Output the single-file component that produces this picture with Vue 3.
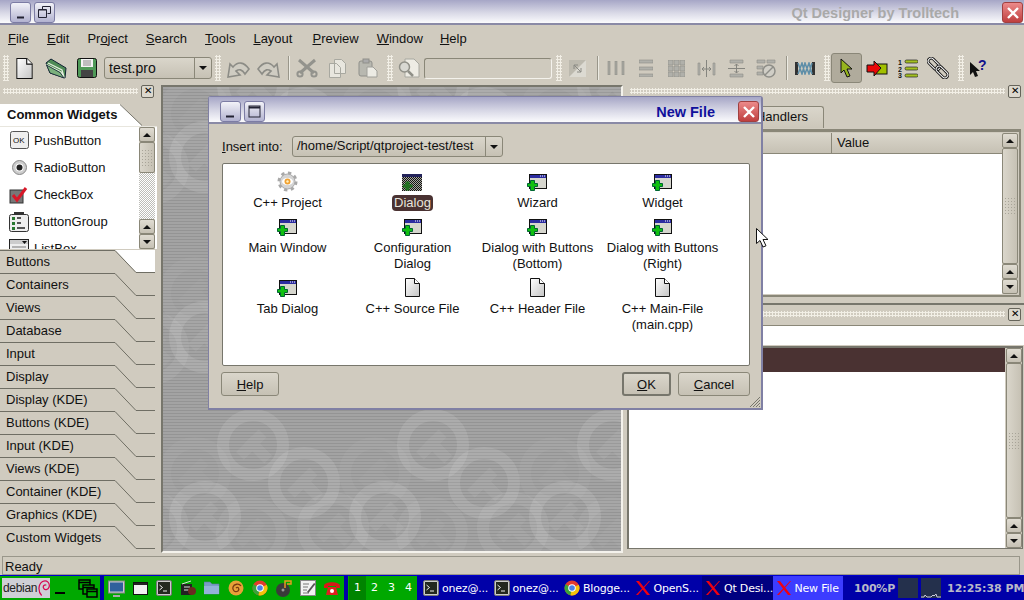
<script setup>
const menus = [
  ['', 'F', 'ile'], ['', 'E', 'dit'], ['Pr', 'o', 'ject'], ['', 'S', 'earch'], ['', 'T', 'ools'],
  ['', 'L', 'ayout'], ['', 'P', 'review'], ['', 'W', 'indow'], ['', 'H', 'elp']
]
const toolboxTabs = [
  'Buttons', 'Containers', 'Views', 'Database', 'Input', 'Display', 'Display (KDE)', 'Buttons (KDE)',
  'Input (KDE)', 'Views (KDE)', 'Container (KDE)', 'Graphics (KDE)', 'Custom Widgets'
]
const files = [
  { icon: 'gear', label: ['C++ Project'] },
  { icon: 'sel', label: ['Dialog'], selected: true },
  { icon: 'winadd', label: ['Wizard'] },
  { icon: 'winadd', label: ['Widget'] },
  { icon: 'winadd', label: ['Main Window'] },
  { icon: 'winadd', label: ['Configuration', 'Dialog'] },
  { icon: 'winadd', label: ['Dialog with Buttons', '(Bottom)'] },
  { icon: 'winadd', label: ['Dialog with Buttons', '(Right)'] },
  { icon: 'winadd', label: ['Tab Dialog'] },
  { icon: 'doc', label: ['C++ Source File'] },
  { icon: 'doc', label: ['C++ Header File'] },
  { icon: 'doc', label: ['C++ Main-File', '(main.cpp)'] }
]
const tasks = [
  { icon: 'term', text: 'onez@...' },
  { icon: 'term', text: 'onez@...' },
  { icon: 'chrome', text: 'Blogge...' },
  { icon: 'x', text: 'OpenS...' },
  { icon: 'x', text: 'Qt Desi...', cls: 'dark' },
  { icon: 'x', text: 'New File', cls: 'active' }
]

// background logo rings, one 180px tile repeated over the workspace
const tile = [
  [45, 72, 0.1], [93, 0, 0.1], [144, 38, 0.1],
  [173, 83, 0.07], [35, 28, 0.04], [92, 88, 0.05]
]
const rings = []
for (let tx = -1; tx < 3; tx++) {
  for (let ty = -1; ty < 3; ty++) {
    tile.forEach(([x, y, o]) => {
      rings.push({ x: x + tx * 180 - 3, y: y + ty * 180 - 2, o })
    })
  }
}
</script>

<template>
  <div class="app">
    <svg class="defs" width="0" height="0">
      <defs>
        <linearGradient id="page" x1="0" y1="0" x2="1" y2="1">
          <stop offset="0" stop-color="#fff" /><stop offset="1" stop-color="#c4c4c4" />
        </linearGradient>
        <pattern id="dither" width="2" height="2" patternUnits="userSpaceOnUse">
          <rect width="2" height="2" fill="#a8a8a0" /><rect width="1" height="1" fill="#111" /><rect x="1" y="1" width="1" height="1" fill="#111" />
        </pattern>
      </defs>
      <symbol id="winadd" viewBox="0 0 20 17">
        <rect x="2.5" y="0.5" width="17" height="14" fill="#d6d6ce" stroke="#111" />
        <rect x="3" y="1" width="16" height="3" fill="#2c2ca0" />
        <path d="M13 2h1M15 2h1M17 2h1" stroke="#fff" />
        <path d="M3.5 6.5h4v3h3v3h-3v4h-4v-4H.5v-3h3z" fill="#10c010" stroke="#063" />
      </symbol>
      <symbol id="sel" viewBox="0 0 20 17">
        <rect x="0" y="0" width="20" height="17" fill="url(#dither)" />
        <rect x="0" y="0" width="20" height="3" fill="#23235a" />
        <path d="M3.5 7.5h4v3h3v3h-3v3h-4v-3H1v-3h2.500z" fill="#207020" />
      </symbol>
      <symbol id="doc" viewBox="0 0 15 19">
        <path d="M.5.5h9l5 5v13H.5z" fill="url(#page)" stroke="#111" />
        <path d="M9.500.5v5h5" fill="#fff" stroke="#111" />
      </symbol>
      <symbol id="gear" viewBox="0 0 21 21">
        <circle cx="10.500" cy="10.500" r="8.500" fill="none" stroke="#a8a8a8" stroke-width="3" stroke-dasharray="3.300 3.400" />
        <circle cx="10.500" cy="10.500" r="7.500" fill="#d4d4d4" stroke="#aaa" />
        <ellipse cx="10.500" cy="10.500" rx="5.500" ry="3.500" fill="#fff" />
        <circle cx="10.500" cy="10.500" r="3" fill="#f0a030" />
        <circle cx="10.500" cy="10.500" r="1.200" fill="#fff0c0" />
      </symbol>
      <symbol id="term" viewBox="0 0 16 16">
        <rect x=".5" y=".5" width="15" height="15" rx="1.500" fill="#ccc" stroke="#777" />
        <rect x="2" y="2" width="12" height="12" fill="#23281f" />
        <path d="M3.500 5l3 2.500-3 2.500M7 11h4" fill="none" stroke="#eee" />
      </symbol>
      <symbol id="chrome" viewBox="0 0 16 16">
        <circle cx="8" cy="8" r="7.500" fill="#e23b2e" />
        <path d="M8 8L1.500 4.200A7.500 7.500 0 0 0 6.500 15.300z" fill="#3aa53a" />
        <path d="M8 8l6.800-3.200A7.500 7.500 0 0 1 6.500 15.300z" fill="#f4c20d" />
        <circle cx="8" cy="8" r="3.800" fill="#fff" /><circle cx="8" cy="8" r="2.800" fill="#4a80e8" />
      </symbol>
      <symbol id="x" viewBox="0 0 16 16">
        <path d="M1 1l3 0 11 14-3 0zM14 1l1 0L3 15 1 15z" fill="#f00010" />
      </symbol>
    </svg>

    <!-- main window title -->
    <header class="titlebar">
      <button class="wbtn"><svg width="12" height="12" viewBox="0 0 12 12"><path d="M2 10.500h7" stroke="#223" stroke-width="2" /></svg></button>
      <button class="wbtn"><svg width="13" height="13" viewBox="0 0 13 13"><path d="M4.500 3V.5h8v7H9.500M.5 3.500h8v8h-8z" fill="none" stroke="#223" /><path d="M1 4h7" stroke="#223" /></svg></button>
      <span class="win-title">Qt Designer by Trolltech</span>
      <button class="wbtn red main-close"><svg width="14" height="14" viewBox="0 0 14 14"><path d="M2 2l10 10M12 2L2 12" stroke="#fff" stroke-width="2.400" /></svg></button>
    </header>

    <nav class="menubar">
      <span v-for="m in menus" :key="m[2]" class="menu">{{ m[0] }}<u>{{ m[1] }}</u>{{ m[2] }}</span>
    </nav>

    <div class="toolbar">
      <i class="grip"></i>
      <span class="tool w31"><svg width="17" height="21" viewBox="0 0 15 19"><use href="#doc" /></svg></span>
      <span class="tool w31">
        <svg width="22" height="21" viewBox="0 0 22 21"><path d="M1 5l5-4 5 3 10 6-1 10-15-5z" fill="#4e8a56" stroke="#123" /><path d="M3 5l14 7 2 7M1.500 6.500L16 14l3 6" fill="none" stroke="#e4eedd" stroke-width="1.200" /><path d="M1.500 7L15 14.500l4 5.500L5 15z" fill="#7bb07d" stroke="#123" stroke-width=".8" /></svg>
      </span>
      <span class="tool w31">
        <svg width="20" height="20" viewBox="0 0 20 20"><rect x=".5" y=".5" width="19" height="19" rx="2" fill="#4f9a58" stroke="#111" /><rect x="4" y="1" width="12" height="8" fill="#f4f4f4" /><path d="M6 3h8M6 5h8M6 7h8" stroke="#888" /><rect x="4" y="12" width="12" height="7" fill="#444" /></svg>
      </span>
      <div class="combo project">test.pro<span class="drop"><i class="arrow down"></i></span></div>
      <i class="grip m3"></i>
      <span class="tool"><svg width="23" height="20" viewBox="0 0 23 20"><path d="M1 19L3 6l3 3c5-6 11-5 16 2l-4 5c-3-5-6-5-9-3l4 4z" fill="#cfccc2" stroke="#8c8c86" stroke-width="1.600" /></svg></span>
      <span class="tool"><svg width="23" height="20" viewBox="0 0 23 20"><path d="M22 19L20 6l-3 3C12 3 6 4 1 11l4 5c3-5 6-5 9-3l-4 4z" fill="#cfccc2" stroke="#8c8c86" stroke-width="1.600" /></svg></span>
      <i class="sep"></i>
      <span class="tool"><svg width="22" height="20" viewBox="0 0 22 20"><path d="M3 2l15 13M19 2L4 15" stroke="#93938d" stroke-width="3" /><circle cx="4" cy="16" r="2.600" fill="none" stroke="#93938d" stroke-width="2" /><circle cx="18" cy="16" r="2.600" fill="none" stroke="#93938d" stroke-width="2" /></svg></span>
      <span class="tool w31"><svg width="19" height="19" viewBox="0 0 19 19"><path d="M6.500.5h7l4 4v10h-11zM1.500 4.500h7l4 4v10h-11z" fill="#e8e6de" stroke="#a8a8a0" /></svg></span>
      <span class="tool"><svg width="20" height="20" viewBox="0 0 20 20"><rect x="1" y="3" width="13" height="15" rx="2" fill="#b8b8b0" stroke="#8f8f8a" /><rect x="5" y="1" width="6" height="4" fill="#aaa" stroke="#8f8f8a" /><path d="M9 9h6l4 4v6H9z" fill="#ecebe4" stroke="#a0a09a" /></svg></span>
      <i class="grip m4"></i>
      <span class="tool"><svg width="22" height="20" viewBox="0 0 22 20"><path d="M7 1h9l5 5v13H7z" fill="#eeece4" stroke="#a8a8a0" /><circle cx="6.500" cy="9" r="5" fill="#d8d8d2" stroke="#909088" stroke-width="1.500" /><path d="M10 13l5 5" stroke="#909088" stroke-width="2.500" /></svg></span>
      <div class="lineedit"></div>
      <i class="grip m0"></i>
      <span class="tool"><svg width="17" height="17" viewBox="0 0 17 17"><rect width="17" height="17" fill="#bcb9ae" /><path d="M17 0v17H0z" fill="#dcdad2" /><path d="M5 5l7 7M5 5h4M5 5v4M12 12H8M12 12V8" stroke="#8a8a84" /></svg></span>
      <i class="sep"></i>
      <span class="tool"><svg width="20" height="14" viewBox="0 0 20 14"><path d="M2 0h2v14H2zM9 0h2v14H9zM16 0h2v14h-2z" fill="#a8a8a2" stroke="#8e8e88" stroke-width=".6" /></svg></span>
      <span class="tool"><svg width="14" height="18" viewBox="0 0 14 18"><path d="M0 1h14v3H0zM0 8h14v3H0zM0 15h14v3H0z" fill="#b0b0aa" stroke="#8e8e88" stroke-width=".6" /></svg></span>
      <span class="tool"><svg width="17" height="17" viewBox="0 0 17 17"><path d="M0 0h5v5H0zM6 0h5v5H6zM12 0h5v5h-5zM0 6h5v5H0zM6 6h5v5H6zM12 6h5v5h-5zM0 12h5v5H0zM6 12h5v5H6zM12 12h5v5h-5z" fill="#b0b0aa" stroke="#8e8e88" stroke-width=".6" /></svg></span>
      <span class="tool"><svg width="19" height="17" viewBox="0 0 19 17"><path d="M1 3h2v12H1zM16 3h2v12h-2z" fill="#b0b0aa" stroke="#8e8e88" stroke-width=".6" /><path d="M5 9h9M5 9l2-2M5 9l2 2M14 9l-2-2M14 9l-2 2M9.500 0v17" stroke="#85857f" fill="none" /></svg></span>
      <span class="tool"><svg width="17" height="19" viewBox="0 0 17 19"><path d="M2 1h13v3H2zM2 15h13v3H2z" fill="#b0b0aa" stroke="#8e8e88" stroke-width=".6" /><path d="M8.500 5v9M8.500 5L6.500 7M8.500 5l2 2M8.500 14l-2-2M8.500 14l2-2M0 9.500h17" stroke="#85857f" fill="none" /></svg></span>
      <span class="tool"><svg width="21" height="19" viewBox="0 0 21 19"><path d="M1 1h8v3H1zM11 1h8v3h-8zM1 7h6v3H1zM1 13h6v3H1z" fill="#b0b0aa" stroke="#8e8e88" stroke-width=".6" /><circle cx="13" cy="12" r="6" fill="#d0cec6" stroke="#8e8e88" stroke-width="1.500" /><path d="M9 16l8-8" stroke="#8e8e88" stroke-width="1.500" /></svg></span>
      <i class="sep"></i>
      <span class="tool"><svg width="20" height="13" viewBox="0 0 20 13"><path d="M0 0h3v13H0zM17 0h3v13h-3z" fill="#333" /><path d="M3 1l4 11 3-11 4 11 3-11M3 12L7 1l3 11 4-11 3 11" fill="none" stroke="#5e8ea8" stroke-width="1.500" /></svg></span>
      <i class="grip m1"></i>
      <span class="tool pressed"><svg width="13" height="20" viewBox="0 0 13 20"><path d="M1 1v14l3-3 3 7 3-1-3-7h5z" fill="#96b41e" stroke="#111" /></svg></span>
      <span class="tool"><svg width="22" height="17" viewBox="0 0 22 17"><rect x="10" y="4" width="11" height="10" fill="#a2c000" stroke="#111" /><path d="M1 5h7V1l7 7-7 8v-4H1z" fill="#e80808" stroke="#111" /></svg></span>
      <span class="tool w31">
        <svg width="20" height="20" viewBox="0 0 20 20"><text x="0" y="6.500" class="ord">1</text><text x="0" y="13.500" class="ord">2</text><text x="0" y="20" class="ord">3</text><rect x="7" y="2" width="13" height="3" rx="1.500" fill="#a4c020" stroke="#222" stroke-width=".7" /><rect x="7" y="9" width="13" height="3" rx="1.500" fill="#a4c020" stroke="#222" stroke-width=".7" /><rect x="7" y="16" width="13" height="3" rx="1.500" fill="#a4c020" stroke="#222" stroke-width=".7" /></svg>
      </span>
      <span class="tool">
        <svg width="22" height="22" viewBox="0 0 22 22" fill="none">
          <g transform="rotate(45 7 7)"><rect x="0" y="4" width="14" height="6" rx="3" stroke="#111" stroke-width="2.800" /><rect x="0" y="4" width="14" height="6" rx="3" stroke="#fff" stroke-width="1" /></g>
          <g transform="rotate(45 15 15)"><rect x="8" y="12" width="14" height="6" rx="3" stroke="#111" stroke-width="2.800" /><rect x="8" y="12" width="14" height="6" rx="3" stroke="#fff" stroke-width="1" /></g>
        </svg>
      </span>
      <i class="grip m5"></i>
      <span class="tool"><svg width="18" height="20" viewBox="0 0 18 20"><path d="M0 4v13l3-3 2 5 3-1-2-5h4z" fill="#111" /><text x="8" y="12" class="whats">?</text></svg></span>
    </div>

    <div class="workspace">
      <!-- widget box -->
      <aside class="dock-left">
        <div class="dock-head"><i class="dock-grip"></i><button class="dock-x">✕</button></div>
        <div class="page-tab">
          <b>Common Widgets</b>
          <svg class="tab-edge" width="45" height="22" viewBox="0 0 45 22"><path d="M0 0H20L42 22H0z" fill="#fff" /><path d="M20 .5L42 21.500" stroke="#77766c" fill="none" /></svg>
        </div>
        <div class="widget-list">
          <ul>
            <li><span class="wicon"><svg width="19" height="19" viewBox="0 0 19 19"><rect x=".5" y=".5" width="18" height="17" rx="2" fill="#eee" stroke="#555" /><text x="3" y="12" class="okt">OK</text></svg></span>PushButton</li>
            <li><span class="wicon"><svg width="15" height="15" viewBox="0 0 15 15"><circle cx="7.500" cy="7.500" r="7" fill="#ccc" stroke="#888" /><circle cx="7.500" cy="7.500" r="4" fill="#fff" /><circle cx="7.500" cy="7.500" r="3" fill="#222" /></svg></span>RadioButton</li>
            <li><span class="wicon"><svg width="20" height="18" viewBox="0 0 20 18"><rect x="1" y="4" width="13" height="13" fill="#777" stroke="#333" /><path d="M4 9l4 5 9-12" fill="none" stroke="#d81828" stroke-width="3" /></svg></span>CheckBox</li>
            <li><span class="wicon"><svg width="20" height="20" viewBox="0 0 20 20"><rect x=".5" y="2.500" width="19" height="17" rx="2" fill="#eee" stroke="#333" /><rect x="5" y="0" width="10" height="3" fill="#333" /><path d="M3 5h3v3H3zM3 10h3v3H3zM3 15h3v3H3z" fill="#287830" /><path d="M8 6h4M8 11h4M8 16h8" stroke="#555" stroke-width="2" /></svg></span>ButtonGroup</li>
            <li><span class="wicon"><svg width="20" height="20" viewBox="0 0 20 20"><rect x=".5" y=".5" width="19" height="19" fill="#eee" stroke="#222" /><rect x="1" y="1" width="18" height="4" fill="#ccc" /><path d="M13 2h5l-2.500 3z" fill="#111" /><path d="M3 8h14M3 11h14M3 14h14M3 17h14" stroke="#777" /></svg></span>ListBox</li>
          </ul>
          <div class="sb checker-sb">
            <div class="sb-btn"><i class="arrow up"></i></div>
            <div class="sb-thumb small"><i class="sb-dots"></i></div>
            <div class="sb-track"></div>
            <div class="sb-btn"><i class="arrow up"></i></div>
            <div class="sb-btn"><i class="arrow down"></i></div>
          </div>
        </div>
        <div class="box-tabs">
          <div v-for="(t, i) in toolboxTabs" :key="t" class="box-tab">
            <svg class="tab-line" width="157" height="23" viewBox="0 0 157 23">
              <path v-if="i === 0" d="M115 0H155V22H136z" fill="#fff" />
              <path d="M0 .5H115L136 22.500H155" fill="none" stroke="#6f6e64" />
            </svg>
            <span>{{ t }}</span>
          </div>
        </div>
      </aside>

      <!-- mdi workspace -->
      <main class="mdi">
        <svg class="mdi-bg" width="100%" height="100%">
          <g v-for="(r, i) in rings" :key="i" :transform="`translate(${r.x} ${r.y})`" :opacity="r.o">
            <circle r="30" fill="none" stroke="#fff" stroke-width="12" />
            <g transform="rotate(-45)" fill="#fff" opacity=".6">
              <rect x="-17" y="-7" width="32" height="11" />
              <rect x="-5" y="-7" width="11" height="28" />
            </g>
          </g>
        </svg>
      </main>

      <!-- property editor and object explorer -->
      <aside class="dock-right">
        <div class="dock-head"><i class="dock-grip"></i><button class="dock-x">✕</button></div>
        <div class="prop-tabs"><span class="prop-tab">Signal Handlers</span></div>
        <div class="prop-frame">
          <div class="prop-table">
            <div class="table-head"><span class="col-prop">Property</span><span class="col-val">Value</span></div>
          </div>
          <div class="sb">
            <div class="sb-btn"><i class="arrow up"></i></div>
            <div class="sb-thumb"><i class="sb-dots"></i></div>
            <div class="sb-btn"><i class="arrow up"></i></div>
            <div class="sb-btn"><i class="arrow down"></i></div>
          </div>
        </div>
        <div class="splitter"></div>
        <div class="dock-head low"><i class="dock-grip"></i><button class="dock-x">✕</button></div>
        <div class="search-row"></div>
        <div class="tree-frame">
          <div class="tree"><div class="tree-sel"></div></div>
          <div class="sb">
            <div class="sb-btn"><i class="arrow up"></i></div>
            <div class="sb-thumb"><i class="sb-dots"></i></div>
            <div class="sb-btn"><i class="arrow up"></i></div>
            <div class="sb-btn"><i class="arrow down"></i></div>
          </div>
        </div>
      </aside>
    </div>

    <div class="statusbar"><span>Ready</span></div>

    <footer class="taskbar">
      <div class="start">
        <div class="debian">
          <span>debian</span>
          <svg width="14" height="18" viewBox="0 0 15 18"><path d="M5 17C1 13 1 5 6 2c5-2 8 2 7 6-1 3-5 4-6 1-1-2 1-4 3-3" fill="none" stroke="#d70751" stroke-width="1.300" /></svg>
        </div>
        <i class="minimize"></i>
        <svg class="stack" width="20" height="19" viewBox="0 0 20 19"><path d="M1 1h11v9H1zM1 3.500h11" fill="none" stroke="#000" stroke-width="1.500" /><path d="M5 6h11v9H5zM5 8.500h11" fill="#00a800" stroke="#000" stroke-width="1.500" /><path d="M9 10h10v8H9zM9 12.500h10" fill="#00a800" stroke="#000" stroke-width="1.500" /></svg>
      </div>
      <div class="launchers">
        <span class="lnch"><svg width="17" height="17" viewBox="0 0 17 17"><rect x=".5" y="1" width="16" height="12" fill="#c8ccd0" stroke="#888" /><rect x="2" y="2.500" width="13" height="9" fill="#30609c" /><path d="M5 15h7v2H5z" fill="#aaa" /></svg></span>
        <span class="lnch"><svg width="15" height="13" viewBox="0 0 15 13"><rect x=".5" y=".5" width="14" height="12" fill="#f0f0f0" stroke="#111" /><rect x="1" y="1" width="13" height="2" fill="#222" /></svg></span>
        <span class="lnch"><svg width="16" height="16" viewBox="0 0 16 16"><use href="#term" /></svg></span>
        <span class="lnch"><svg width="16" height="16" viewBox="0 0 16 16"><rect x="1" y="4" width="11" height="11" fill="#222" /><path d="M2 4l9-3M4 7h6M4 10h6" stroke="#ddd" /><circle cx="12" cy="11" r="4" fill="#6a2a20" /></svg></span>
        <span class="lnch"><svg width="16" height="14" viewBox="0 0 16 14"><path d="M0 1h6l2 2h7v10H0z" fill="#7a9cc6" stroke="#5a7aa0" stroke-width=".6" /><path d="M0 5h15v8H0z" fill="#93b2d8" /></svg></span>
        <span class="lnch"><svg width="16" height="16" viewBox="0 0 16 16"><circle cx="8" cy="8" r="7.500" fill="#e8a038" /><path d="M8 8c2-2 4 1 2 3-3 2-6-1-5-4 1-3 6-4 8-1" fill="none" stroke="#7a3a10" stroke-width="1.300" /></svg></span>
        <span class="lnch"><svg width="16" height="16" viewBox="0 0 16 16"><use href="#chrome" /></svg></span>
        <span class="lnch"><svg width="17" height="17" viewBox="0 0 17 17"><circle cx="7" cy="10" r="7" fill="#3a3a3a" /><circle cx="7" cy="10" r="1.500" fill="#999" /><path d="M9 8V1h6v3h-4" fill="none" stroke="#e89a20" stroke-width="1.500" /></svg></span>
        <span class="lnch"><svg width="16" height="16" viewBox="0 0 16 16"><rect x=".5" y=".5" width="15" height="15" fill="#f2f2f2" stroke="#888" /><path d="M3 4h6M3 7h5M3 10h4M3 13h6" stroke="#777" /><path d="M7 12l7-9 1.500 1-7 9z" fill="#555" /></svg></span>
        <span class="lnch"><svg width="16" height="14" viewBox="0 0 16 14"><path d="M0 5c0-5 16-5 16 0v2h-4V5H4v2H0z" fill="#d81818" /><path d="M4 6h8l2 8H2z" fill="#e02020" /><circle cx="8" cy="10" r="2" fill="#fff" /></svg></span>
      </div>
      <div class="pager">
        <span class="cur">1</span><span>2</span><span>3</span><span>4</span>
      </div>
      <div class="tasklist">
        <div v-for="(t, i) in tasks" :key="i" class="task" :class="t.cls">
          <svg width="16" height="16" viewBox="0 0 16 16"><use :href="'#' + t.icon" /></svg>
          <span>{{ t.text }}</span>
        </div>
      </div>
      <div class="tray">
        <b class="batt">100%P</b>
        <i class="mon"></i>
        <i class="mon"><svg width="20" height="20" viewBox="0 0 20 20"><path d="M0 19h3l1-2 2 2h4l2-2 1 1 2-2 1 3h4" fill="none" stroke="#c8c8d8" /></svg></i>
        <b class="clock">12:25:38 PM</b>
      </div>
    </footer>

    <!-- new file dialog -->
    <section class="dialog">
      <div class="dlg-title">
        <button class="wbtn"><svg width="12" height="12" viewBox="0 0 12 12"><path d="M1 10.500h8" stroke="#223" stroke-width="2" /></svg></button>
        <button class="wbtn"><svg width="13" height="13" viewBox="0 0 13 13"><rect x="1" y="1" width="11" height="11" fill="none" stroke="#223" /><path d="M1 2.500h11" stroke="#223" stroke-width="2" /></svg></button>
        <b class="dlg-name">New File</b>
        <button class="wbtn red"><svg width="14" height="14" viewBox="0 0 14 14"><path d="M2 2l10 10M12 2L2 12" stroke="#fff" stroke-width="2.400" /></svg></button>
      </div>
      <div class="dlg-body">
        <div class="insert-row">
          <label><u>I</u>nsert into:</label>
          <div class="combo path">/home/Script/qtproject-test/test<span class="drop"><i class="arrow down"></i></span></div>
        </div>
        <div class="file-grid">
          <div v-for="(f, i) in files" :key="f.label[0]" class="file-item" :class="{ big: i < 4 }">
            <span class="file-icon">
              <svg v-if="f.icon === 'gear'" width="21" height="21" viewBox="0 0 21 21"><use href="#gear" /></svg>
              <svg v-else-if="f.icon === 'doc'" class="doc-icon" width="15" height="19" viewBox="0 0 15 19"><use href="#doc" /></svg>
              <svg v-else class="win-icon" width="20" height="17" viewBox="0 0 20 17"><use :href="'#' + f.icon" /></svg>
            </span>
            <span v-for="l in f.label" :key="l" class="file-label" :class="{ selected: f.selected }">{{ l }}</span>
          </div>
        </div>
        <div class="dlg-buttons">
          <button class="btn help-btn"><u>H</u>elp</button>
          <span class="spacer"></span>
          <button class="btn ok"><u>O</u>K</button>
          <button class="btn cancel"><u>C</u>ancel</button>
        </div>
      </div>
      <svg class="size-grip" width="12" height="12" viewBox="0 0 12 12"><path d="M11 1L1 11M11 4l-7 7M11 7l-4 4M11 10l-1 1" stroke="#77766c" /></svg>
    </section>

    <svg class="cursor" width="13" height="20" viewBox="0 0 13 20"><path d="M.5.500v15l3.500-3 3 6.500 3-1.200-3-6.300h5z" fill="#fff" stroke="#111" /></svg>
  </div>
</template>

<style scoped>
.app {
  position: relative;
  width: 1024px;
  height: 600px;
  overflow: hidden;
  display: flex;
  flex-direction: column;
  background: #d0cbbf;
  color: #111;
  font-family: "Liberation Sans", Arial, sans-serif;
  font-size: 13px;
}
.defs { position: absolute; }
button { font: inherit; color: inherit; padding: 0; }
i { display: block; font-style: normal; }

.titlebar {
  height: 25px;
  box-sizing: border-box;
  display: flex;
  align-items: center;
  padding: 2px 1px 0 10px;
  gap: 3px;
  border-bottom: 2px solid #8a8aa6;
  background: linear-gradient(#a6a6c6, #d8d8e6 55%, #fbfbfd);
}
.wbtn {
  width: 21px;
  height: 21px;
  box-sizing: border-box;
  border: 1px solid #7c7ca4;
  border-radius: 3px;
  background: linear-gradient(#f2f2f8, #b2b2d0);
  display: flex;
  align-items: center;
  justify-content: center;
}
.wbtn.red { border-color: #a04040; background: linear-gradient(#ec8a8a, #bf3f3f); }
.win-title { margin-left: auto; margin-right: 40px; font-size: 14.500px; font-weight: bold; color: #a9a9a9; }

.menubar { height: 27px; display: flex; align-items: center; padding-left: 8px; box-sizing: border-box; }
.menu { margin-right: 18px; }
.menu:nth-child(6) { margin-right: 20px; }
.menu:nth-child(8) { margin-right: 17px; }

.toolbar { height: 32px; display: flex; align-items: center; padding-left: 3px; box-sizing: border-box; }
.grip {
  width: 6px;
  height: 26px;
  flex: none;
  background-image: radial-gradient(circle, #f2efe6 1px, transparent 1.2px);
  background-size: 3px 3px;
}
.grip.m0 { margin: 0 0 0 4px; }
.grip.m1 { margin: 0 1px 0 4px; }
.grip.m3 { margin: 0 2px 0 3px; }
.grip.m4 { margin: 0 1px 0 4px; }
.grip.m5 { margin: 0 0 0 5px; }
.sep { width: 1px; height: 24px; background: #99968a; margin: 0 3px 0 5px; box-shadow: 1px 0 #ecebe3; flex: none; }
.tool { width: 30px; height: 30px; flex: none; display: flex; align-items: center; justify-content: center; box-sizing: border-box; }
.tool.w31 { width: 31px; }
.tool.pressed { width: 31px; background: #b0ab9c; border: 1px solid #8a8778; border-radius: 3px; }
.ord { font: bold 7px "Liberation Sans", sans-serif; fill: #111; }
.whats { font: bold 14px "Liberation Sans", sans-serif; fill: #12128c; }
.combo {
  position: relative;
  box-sizing: border-box;
  height: 22px;
  line-height: 20px;
  padding-left: 4px;
  border: 1px solid #8a8778;
  border-radius: 3px;
  background: linear-gradient(#dad6cb, #c6c1b4);
}
.combo.project { width: 108px; margin-left: 2px; font-size: 14px; }
.drop {
  position: absolute;
  right: 0;
  top: 0;
  bottom: 0;
  width: 16px;
  border-left: 1px solid #8a8778;
  display: flex;
  align-items: center;
  justify-content: center;
}
.arrow { width: 0; height: 0; border-left: 4px solid transparent; border-right: 4px solid transparent; }
.arrow.down { border-top: 4px solid #111; }
.arrow.up { border-bottom: 4px solid #111; }
.lineedit { width: 128px; height: 21px; box-sizing: border-box; border: 1px solid #8a8778; border-bottom-color: #f4f2ec; border-right-color: #f4f2ec; border-radius: 3px; background: #cfcabe; flex: none; }

.workspace { flex: 1; display: flex; min-height: 0; }

.dock-left { width: 157px; flex: none; display: flex; flex-direction: column; }
.dock-head { height: 20px; flex: none; display: flex; align-items: center; padding: 0 3px 6px 3px; box-sizing: border-box; gap: 3px; }
.dock-grip {
  flex: 1;
  height: 6px;
  background-image: radial-gradient(circle, #f2efe6 1px, transparent 1.2px);
  background-size: 3px 3px;
}
.dock-x {
  width: 13px;
  height: 13px;
  border: 1px solid #66645a;
  border-radius: 2px;
  background: #dcd8cd;
  font-size: 10px;
  line-height: 10px;
  color: #000;
  flex: none;
}
.page-tab { position: relative; height: 22px; line-height: 21px; padding-left: 7px; background: linear-gradient(90deg, #fff 120px, transparent 120px); width: 120px; flex: none; }
.page-tab b { position: relative; z-index: 1; font-size: 13px; }
.tab-edge { position: absolute; left: 100px; top: 0; }
.widget-list { height: 123px; flex: none; display: flex; background: #fff; border-top: 1px solid #e8e6de; box-sizing: border-box; }
.widget-list ul { list-style: none; margin: 0; padding: 0 0 0 4px; flex: 1; overflow: hidden; min-width: 0; }
.widget-list li { height: 27px; display: flex; align-items: center; }
.wicon { width: 30px; display: flex; justify-content: center; flex: none; }

.sb { width: 16px; flex: none; display: flex; flex-direction: column; background: #d0cbbf; }
.checker-sb { margin-right: 2px; }
.sb-btn { height: 15px; flex: none; box-sizing: border-box; border: 1px solid #8a8778; border-radius: 2px; background: linear-gradient(#e0dcd2, #c6c1b4); display: flex; align-items: center; justify-content: center; }
.sb-thumb { flex: 1; box-sizing: border-box; border: 1px solid #8a8778; border-radius: 2px; background: linear-gradient(90deg, #dad6cb, #c6c1b4); display: flex; align-items: center; justify-content: center; }
.sb-thumb.small { flex: none; height: 31px; }
.sb-track { flex: 1; background: repeating-conic-gradient(#bdbdb8 0 25%, #fff 0 50%) 0 0 / 2px 2px; }
.sb-dots { width: 12px; height: 18px; background-image: radial-gradient(circle, #a8a498 .8px, transparent 1px); background-size: 3px 3px; }

.box-tabs { flex: none; padding-top: 1px; background: #d0cbbf; }
.box-tab { position: relative; height: 23px; line-height: 24px; padding-left: 6px; }
.box-tab span { position: relative; }
.tab-line { position: absolute; left: 0; top: 0; }

.mdi {
  width: 462px;
  height: 468px;
  margin: 1px 0 0 4px;
  flex: none;
  box-sizing: border-box;
  border-top: 2px solid #77766c;
  border-left: 2px solid #77766c;
  border-bottom: 2px solid #f4f2ec;
  border-right: 2px solid #f4f2ec;
  background: repeating-linear-gradient(#a3a3a3 0 2px, #949494 2px 3px);
}
.mdi-bg { display: block; }

.dock-right { width: 397px; margin-left: 4px; flex: none; display: flex; flex-direction: column; }
.prop-tabs { height: 25px; flex: none; display: flex; }
.prop-tab { width: 197px; height: 22px; margin-top: 2px; line-height: 19px; text-align: right; padding-right: 15px; box-sizing: border-box; border: 1px solid #8a8778; border-bottom: 0; border-radius: 3px 3px 0 0; background: linear-gradient(#dad6cb, #ccc7ba); }
.prop-frame { height: 168px; width: 394px; box-sizing: border-box; flex: none; display: flex; border: 2px solid #8a8778; border-width: 3px 2px 2px 2px; padding: 1px 1px 1px 0; }
.prop-table { flex: 1; background: #fff; min-width: 0; }
.table-head { height: 21px; display: flex; box-sizing: border-box; border-bottom: 1px solid #8a8778; background: linear-gradient(#dad6cb, #c6c1b4); line-height: 20px; }
.col-prop { width: 203px; border-right: 1px solid #8a8778; padding-left: 6px; box-sizing: border-box; }
.col-val { padding-left: 5px; }
.splitter { height: 8px; flex: none; border-bottom: 2px solid #77766c; box-sizing: border-box; }
.dock-head.low { height: 20px; padding-right: 3px; padding-bottom: 2px; }
.search-row { height: 20px; flex: none; background: #fff; border-top: 1px solid #8a8778; box-sizing: border-box; }
.tree-frame { height: 203px; margin-top: 1px; flex: none; display: flex; width: 396px; box-sizing: border-box; border: 2px solid #77766c; border-width: 2px 1px 1px 2px; }
.tree { flex: 1; background: #fff; min-width: 0; margin-right: 1px; }
.tree-sel { height: 24px; background: #4a3232; }

.statusbar { height: 19px; flex: none; box-sizing: border-box; margin: 0 4px 0 2px; border: 1px solid #99968a; line-height: 19px; padding-left: 2px; font-size: 13px; }

.taskbar { height: 25px; flex: none; box-sizing: border-box; border-top: 1px solid #0000d0; display: flex; background: #0000a8; color: #fff; font-family: "DejaVu Sans", sans-serif; font-size: 11px; }
.start { width: 100px; flex: none; background: #00a800; display: flex; align-items: center; }
.debian { width: 48px; height: 20px; margin-left: 2px; display: flex; align-items: center; background: #cfcfd6; color: #222; font-family: "Liberation Sans", sans-serif; font-size: 12px; overflow: hidden; flex: none; }
.debian span { margin-left: 1px; letter-spacing: -.3px; }
.debian svg { flex: none; margin-left: 0; }
.minimize { width: 10px; height: 2px; background: #000; margin: 9px 0 0 5px; }
.stack { margin-left: 13px; }
.launchers { width: 240px; margin-left: 4px; flex: none; background: #00a800; display: flex; align-items: center; box-sizing: border-box; }
.lnch { width: 24px; flex: none; display: flex; justify-content: center; }
.pager { width: 69px; margin-left: 4px; flex: none; background: #00a800; display: flex; align-items: center; font-size: 11px; }
.pager span { width: 17px; text-align: center; line-height: 24px; }
.pager .cur { background: #008400; margin-left: 1px; }
.tasklist { display: flex; margin-left: 3px; width: 423px; flex: none; }
.task { width: 70.500px; flex: none; box-sizing: border-box; display: flex; align-items: center; gap: 3px; padding-left: 3px; white-space: nowrap; overflow: hidden; letter-spacing: -.2px; }
.task svg { flex: none; }
.task.dark { background: #000080; }
.task.active { background: #3c3cff; }
.tray { flex: 1; display: flex; align-items: center; color: #b8b8c8; }
.batt { margin-left: 11px; width: 44px; font-size: 11px; letter-spacing: -.2px; }
.mon { width: 20px; height: 20px; background: #24304c; margin-right: 3px; }
.mon svg { display: block; }
.clock { margin-left: 3px; font-size: 11px; white-space: nowrap; }

.dialog {
  position: absolute;
  left: 208px;
  top: 96px;
  width: 555px;
  height: 314px;
  box-sizing: border-box;
  border: 1px solid #8080a4;
  border-right-width: 2px;
  border-bottom-width: 2px;
  border-radius: 3px 3px 0 0;
  background: #d0cbbf;
  display: flex;
  flex-direction: column;
}
.dlg-title {
  height: 27px;
  flex: none;
  box-sizing: border-box;
  display: flex;
  align-items: center;
  gap: 3px;
  padding: 4px 2px 0 11px;
  border-bottom: 2px solid #8a8aa6;
  background: linear-gradient(#a6a6c6, #d8d8e6 55%, #fbfbfd);
}
.dlg-name { margin-left: auto; margin-right: 20px; font-size: 14.500px; color: #10109c; }
.dlg-body { flex: 1; padding: 12px 11px 0 13px; display: flex; flex-direction: column; min-height: 0; }
.insert-row { display: flex; align-items: center; height: 21px; margin-bottom: 1px; }
.insert-row label { width: 70px; }
.combo.path { width: 211px; height: 21px; line-height: 18px; padding-left: 4px; }
.file-grid {
  height: 203px;
  margin-top: 5px;
  box-sizing: border-box;
  border: 1px solid #77766c;
  border-radius: 2px;
  background: #fff;
  padding: 7px 0 0 2px;
  display: grid;
  grid-template-columns: repeat(4, 125px);
  grid-template-rows: 47px 61px auto;
}
.file-item { display: flex; flex-direction: column; align-items: center; }
.file-icon { height: 22px; flex: none; display: flex; align-items: center; justify-content: center; }
.file-icon svg { margin-bottom: 3px; }
.file-icon .win-icon { margin-right: 2px; }
.file-icon .doc-icon { margin-bottom: 5px; }
.file-item.big .file-icon { height: 24px; }
.file-item.big .win-icon { margin-bottom: 1px; }
.file-label { line-height: 16px; white-space: nowrap; }
.file-label.selected { background: #4a3232; color: #e8e4dc; border-radius: 4px; padding: 0 2px; }
.dlg-buttons { display: flex; margin: 6px 0 0 -1px; gap: 7px; }
.spacer { flex: 1; }
.btn { height: 24px; box-sizing: border-box; border: 1px solid #8a8778; border-radius: 3px; background: linear-gradient(#dad6cb, #c6c1b4); }
.btn.help-btn { width: 58px; }
.btn.ok { width: 49px; border-width: 2px; border-color: #77766c; }
.btn.cancel { width: 72px; }
.size-grip { position: absolute; right: 0; bottom: 0; }
.cursor { position: absolute; left: 756px; top: 228px; }
.okt { font: 8px "Liberation Sans", sans-serif; fill: #111; }
</style>

<style>
html, body { margin: 0; padding: 0; background: #d0cbbf; }
</style>
